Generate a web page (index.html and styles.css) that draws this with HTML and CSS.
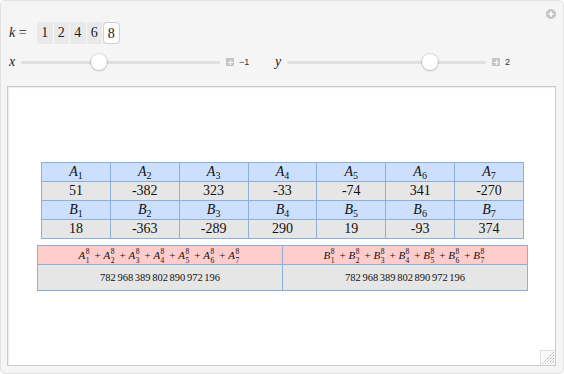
FILE: index.html
```html
<!DOCTYPE html>
<html>
<head>
<meta charset="utf-8">
<link rel="stylesheet" href="styles.css">
</head>
<body>
<div class="panel">
  <span class="addbtn"><svg width="10" height="10" viewBox="0 0 10 10"><circle cx="5" cy="5" r="5" fill="#c4c4c4"/><path d="M5 2.3v5.4M2.3 5h5.4" stroke="#fff" stroke-width="1.6"/></svg></span>
  <div class="controls">
    <div class="krow">
      <span class="klabel"><i>k</i> =</span>
      <div class="setter">
        <span class="opt">1</span><span class="opt">2</span><span class="opt">4</span><span class="opt">6</span><span class="opt sel">8</span>
      </div>
    </div>
    <div class="srow">
      <span class="vlabel"><i>x</i></span>
      <div class="track"><span class="thumb" style="left:78px"></span></div>
      <span class="plus"></span>
      <span class="val">−1</span>
      <span class="vlabel ylab"><i>y</i></span>
      <div class="track"><span class="thumb" style="left:143px"></span></div>
      <span class="plus"></span>
      <span class="val">2</span>
    </div>
  </div>
  <div class="out">
    <div class="content">
      <table class="t1">
        <tr class="hd"><td><i>A</i><sub>1</sub></td><td><i>A</i><sub>2</sub></td><td><i>A</i><sub>3</sub></td><td><i>A</i><sub>4</sub></td><td><i>A</i><sub>5</sub></td><td><i>A</i><sub>6</sub></td><td><i>A</i><sub>7</sub></td></tr>
        <tr class="vl"><td>51</td><td>-382</td><td>323</td><td>-33</td><td>-74</td><td>341</td><td>-270</td></tr>
        <tr class="hd"><td><i>B</i><sub>1</sub></td><td><i>B</i><sub>2</sub></td><td><i>B</i><sub>3</sub></td><td><i>B</i><sub>4</sub></td><td><i>B</i><sub>5</sub></td><td><i>B</i><sub>6</sub></td><td><i>B</i><sub>7</sub></td></tr>
        <tr class="vl"><td>18</td><td>-363</td><td>-289</td><td>290</td><td>19</td><td>-93</td><td>374</td></tr>
      </table>
      <table class="t2">
        <tr class="pk">
          <td><span class="tm"><i>A</i><span class="ss"><span class="up">8</span><span class="dn">1</span></span></span> + <span class="tm"><i>A</i><span class="ss"><span class="up">8</span><span class="dn">2</span></span></span> + <span class="tm"><i>A</i><span class="ss"><span class="up">8</span><span class="dn">3</span></span></span> + <span class="tm"><i>A</i><span class="ss"><span class="up">8</span><span class="dn">4</span></span></span> + <span class="tm"><i>A</i><span class="ss"><span class="up">8</span><span class="dn">5</span></span></span> + <span class="tm"><i>A</i><span class="ss"><span class="up">8</span><span class="dn">6</span></span></span> + <span class="tm"><i>A</i><span class="ss"><span class="up">8</span><span class="dn">7</span></span></span></td>
          <td><span class="tm"><i>B</i><span class="ss"><span class="up">8</span><span class="dn">1</span></span></span> + <span class="tm"><i>B</i><span class="ss"><span class="up">8</span><span class="dn">2</span></span></span> + <span class="tm"><i>B</i><span class="ss"><span class="up">8</span><span class="dn">3</span></span></span> + <span class="tm"><i>B</i><span class="ss"><span class="up">8</span><span class="dn">4</span></span></span> + <span class="tm"><i>B</i><span class="ss"><span class="up">8</span><span class="dn">5</span></span></span> + <span class="tm"><i>B</i><span class="ss"><span class="up">8</span><span class="dn">6</span></span></span> + <span class="tm"><i>B</i><span class="ss"><span class="up">8</span><span class="dn">7</span></span></span></td>
        </tr>
        <tr class="gv"><td>782 968 389 802 890 972 196</td><td>782 968 389 802 890 972 196</td></tr>
      </table>
    </div>
    <span class="grip"><svg width="14" height="14" viewBox="0 0 14 14"><path d="M13 4L4 13M13 7L7 13M13 10L10 13M13 1L1 13" stroke="#9a9a9a" stroke-width="1" stroke-dasharray="1.2 1"/></svg></span>
  </div>
</div>
</body>
</html>
```

FILE: styles.css
```css
html, body { margin: 0; padding: 0; }
body { width: 564px; height: 374px; background: #fff; font-family: "Liberation Serif", serif; }
.panel {
  position: relative;
  box-sizing: border-box;
  width: 564px; height: 374px;
  background: #f5f5f5;
  border: 1px solid #e2e2e2;
  border-radius: 5px;
  padding: 21px 7px 7px 6px;
  display: flex; flex-direction: column;
}
.addbtn { position: absolute; right: 7px; top: 8px; width: 10px; height: 10px; line-height: 0; }
.controls { display: flex; flex-direction: column; gap: 11px; height: 64px; }
.krow { display: flex; align-items: center; height: 22px; }
.klabel { font-size: 14px; color: #222; width: 28px; padding-left: 2px; }
.setter { display: flex; background: #e9e9e9; border-radius: 4px; height: 22px; }
.opt { width: 16.5px; text-align: center; font-size: 14px; line-height: 22px; color: #222; border-right: 1px solid #f8f8f8; box-sizing: border-box; }
.opt.sel { background: #fff; border: 1px solid #cfcfcf; border-radius: 4px; }
.srow { display: flex; align-items: center; height: 14px; }
.vlabel { font-size: 14px; width: 12px; padding-left: 2px; color: #222; }
.ylab { margin-left: 24px; width: 12px; padding-left: 0; }
.track { position: relative; width: 199px; height: 3px; background: #e0e0e0; border-radius: 2px; }
.thumb { position: absolute; top: -7px; width: 16px; height: 16px; margin-left: -8px; border-radius: 50%; background: #fff; box-shadow: 0 0 1px 1px rgba(0,0,0,0.12), 0 1px 2px rgba(0,0,0,0.15); }
.plus { width: 8px; height: 8px; background: #c6c6c6; margin-left: 6px; position: relative; }
.plus::before { content: ""; position: absolute; left: 1.5px; top: 3.5px; width: 5px; height: 1px; background: #fff; }
.plus::after { content: ""; position: absolute; left: 3.5px; top: 1.5px; width: 1px; height: 5px; background: #fff; }
.val { font-family: "Liberation Sans", sans-serif; font-size: 9px; color: #333; margin-left: 5px; width: 12px; }
.out {
  position: relative;
  flex: 1;
  background: #fff;
  border: 1px solid #cbcbcb;
  box-shadow: inset 1px 1px 1px rgba(0,0,0,0.08);
  display: flex; align-items: center; justify-content: center;
}
.content { display: flex; flex-direction: column; align-items: center; gap: 6px; margin-left: 2px; margin-top: 1px; }
table { border-collapse: collapse; }
.t1 { width: 483px; table-layout: fixed; border: 1px solid #7f9fcf; }
.t1 td { border: 1px solid #8eaedc; text-align: center; font-size: 14px; height: 18px; padding: 0; line-height: 18px; color: #111; }
.hd td { background: #cce0fe; }
.vl td { background: #e6e6e6; }
sub { font-size: 10px; vertical-align: -3px; line-height: 0; }
.t2 { width: 491px; table-layout: fixed; border: 1px solid #7f9fcf; }
.t2 td { border: 1px solid #8eaedc; text-align: center; padding: 0; color: #111; }
.pk td { background: #ffcccc; height: 18px; font-size: 11px; line-height: 18px; }
.gv td { background: #e6e6e6; height: 25px; font-size: 10.5px; word-spacing: -1px; }
.tm { display: inline-block; }
.ss { display: inline-block; vertical-align: middle; width: 5px; height: 15px; position: relative; margin-left: 0.5px; margin-right: 1px; }
.up, .dn { position: absolute; left: 0; font-size: 7.5px; line-height: 7px; }
.up { top: -1px; }
.dn { top: 8px; }
.grip { position: absolute; right: 0; bottom: 0; width: 14px; height: 14px; border-left: 1px solid #ddd; border-top: 1px solid #ddd; background: #fafafa; line-height: 0; }
```
